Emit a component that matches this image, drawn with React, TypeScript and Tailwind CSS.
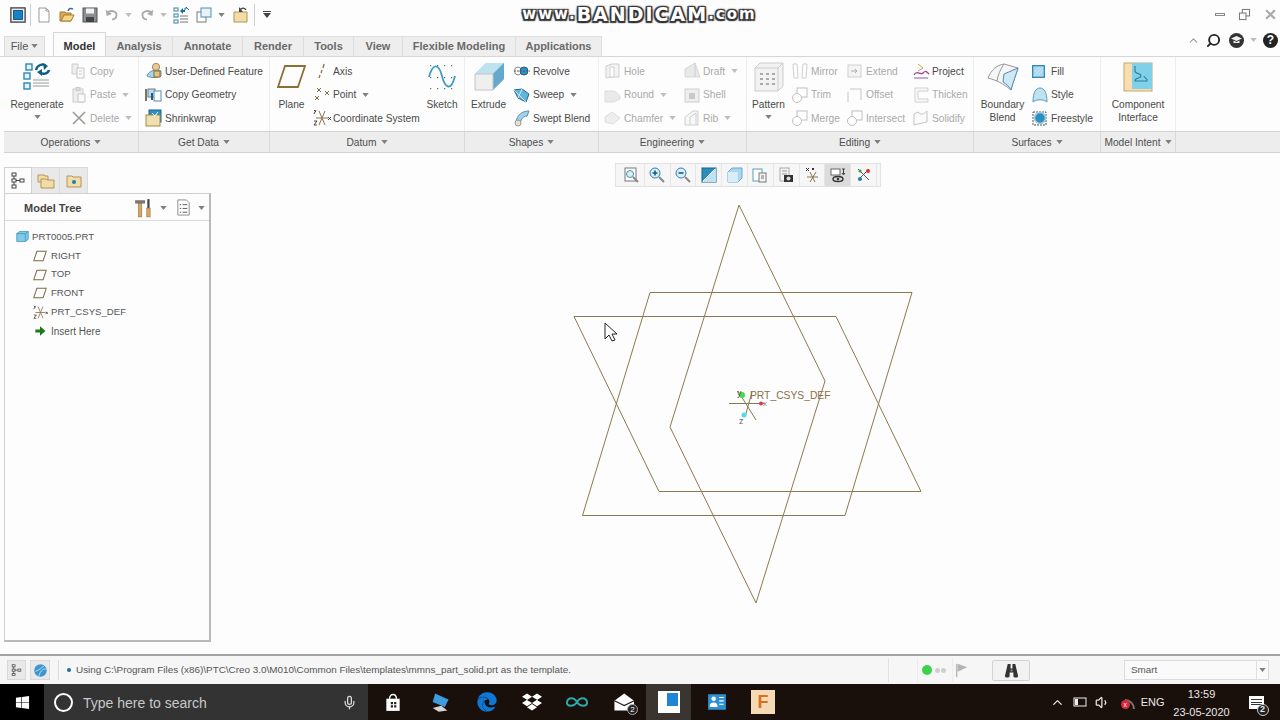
import { ReactNode } from "react"
import { FaWindows, FaDropbox, FaEdge } from "react-icons/fa"
import { ChevronUp, Volume1, Mic, Search } from "lucide-react"

// small triangle used by every dropdown
const Caret = ({ light = false }: { light?: boolean }) => (
  <svg width="7" height="4" viewBox="0 0 8 5" className="shrink-0">
    <path d="M0 0H8L4 5Z" fill={light ? "#bdbdbd" : "#808080"} />
  </svg>
)

const Ico = ({ s = 18, children }: { s?: number; children: ReactNode }) => (
  <svg width={s} height={s} viewBox="0 0 18 18" fill="none" className="shrink-0">
    {children}
  </svg>
)

// quick access toolbar
const AppIcon = () => (
  <Ico s={16}>
    <rect x="1" y="1" width="16" height="16" fill="#eee" stroke="#444" strokeWidth="1.5" />
    <rect x="4" y="4" width="10" height="10" fill="#1583c9" stroke="#0c4f7e" />
  </Ico>
)
const NewIcon = () => (
  <Ico>
    <path d="M4 2H11L14 5V16H4Z" fill="#fff" stroke="#999" />
    <path d="M11 2V5H14" stroke="#999" />
  </Ico>
)
const OpenIcon = () => (
  <Ico>
    <path d="M2 6H7L8 7H13V15H2Z" fill="#d9ad58" stroke="#a57c2e" />
    <path d="M3 15L6 9H16L13 15Z" fill="#f5d48c" stroke="#a57c2e" />
    <path d="M10 5C11 2 13 2 15 3" stroke="#4a6d8c" strokeWidth="1.5" />
  </Ico>
)
const SaveIcon = () => (
  <Ico>
    <rect x="2" y="2" width="14" height="14" fill="#8a8f96" stroke="#555" />
    <rect x="5" y="2.5" width="8" height="5" fill="#f2f2f2" />
    <rect x="5" y="11" width="8" height="5" fill="#444" />
  </Ico>
)
const UndoIcon = ({ flip = false }: { flip?: boolean }) => (
  <Ico s={16}>
    <g transform={flip ? "translate(18 0) scale(-1 1)" : undefined}>
      <path d="M4 6C8 3 15 5 14 10C13.5 13 11 14 9 14" stroke="#a9a9a9" strokeWidth="2" />
      <path d="M2 3L3 10L9 8Z" fill="#a9a9a9" />
    </g>
  </Ico>
)
const RegenSmall = () => (
  <Ico>
    <rect x="2" y="2" width="4" height="3" stroke="#3a7fa8" />
    <rect x="2" y="8" width="4" height="3" stroke="#3a7fa8" />
    <rect x="2" y="14" width="4" height="3" stroke="#3a7fa8" />
    <path d="M8 10H16M8 13H16M8 16H16" stroke="#777" />
    <path d="M8 5L11 2V4H13V6H11V8Z" fill="#1f6d9b" />
    <path d="M17 4L14 1V3H12" stroke="#1f6d9b" />
  </Ico>
)
const WindowsIcon = () => (
  <Ico>
    <rect x="2" y="6" width="9" height="10" fill="#fff" stroke="#777" />
    <rect x="6" y="2" width="10" height="9" fill="#e8f2f8" stroke="#4f8fb5" />
  </Ico>
)
const CloseFolder = () => (
  <Ico>
    <path d="M2 6H15V16H2Z" fill="#f3dca6" stroke="#b4935a" />
    <path d="M8 4C10 1 13 2 14 4" stroke="#444" strokeWidth="1.4" />
    <path d="M7 1V6H11Z" fill="#444" />
  </Ico>
)

// ribbon, small rows
const CopyIcon = () => (
  <Ico>
    <path d="M2 2H8V12H2Z" fill="#eee" stroke="#ccc" />
    <path d="M7 6H14V16H7Z" fill="#fafafa" stroke="#c4c4c4" />
    <path d="M9 9H12M9 12H12" stroke="#ccc" />
  </Ico>
)
const PasteIcon = () => (
  <Ico>
    <rect x="3" y="3" width="10" height="13" fill="#eee" stroke="#ccc" />
    <rect x="6" y="1.5" width="4" height="3" fill="#ddd" stroke="#ccc" />
    <path d="M8 8H15V16H8Z" fill="#fafafa" stroke="#c4c4c4" />
  </Ico>
)
const DeleteIcon = () => (
  <Ico>
    <path d="M3 3L15 15M15 3L3 15" stroke="#9a9a9a" strokeWidth="1.6" />
  </Ico>
)
const UdfIcon = () => (
  <Ico>
    <circle cx="11" cy="5" r="3.6" fill="#e9c99b" stroke="#a78252" />
    <path d="M2 14C4 8 12 7 16 9V14C12 16 6 16 2 14Z" fill="#a6d4ec" stroke="#5b94b6" />
    <rect x="9" y="9" width="6" height="6" fill="#e5c27f" stroke="#8c6a30" />
  </Ico>
)
const CopyGeomIcon = () => (
  <Ico>
    <path d="M1 3V15" stroke="#444" strokeWidth="1.5" />
    <rect x="3" y="3" width="7" height="8" fill="#b9dcef" stroke="#777" />
    <rect x="9" y="5" width="7" height="10" fill="#fff" stroke="#4f8fb5" />
    <path d="M7 7V14" stroke="#1d5f87" strokeWidth="2" />
  </Ico>
)
const ShrinkIcon = () => (
  <Ico>
    <rect x="4" y="1" width="12" height="12" fill="#2d93c6" stroke="#1d5f87" />
    <rect x="1" y="6" width="14" height="11" fill="#f0dfb0" stroke="#a38a4f" />
    <path d="M7 4L10 7L13 3" stroke="#fff" />
  </Ico>
)
const AxisIcon = () => (
  <Ico>
    <path d="M11 2L10 6M9 8L8 11M7 13L6 16" stroke="#8a7448" strokeWidth="1.3" />
  </Ico>
)
const PointIcon = () => (
  <Ico>
    <path d="M4 2L8 6M8 2L4 6M12 5L16 9M16 5L12 9M2 10L6 14M6 10L2 14" stroke="#7d6a42" />
  </Ico>
)
const CsysIcon = ({ s = 18 }: { s?: number }) => (
  <Ico s={s}>
    <path d="M6 2L12 16M12 2L6 16M3 9H15" stroke="#8a7448" />
    <path d="M1 1L3 3M3 1L1 5M1 12H4L1 16H4M15 8L18 11M18 8L15 11" stroke="#333" strokeWidth="0.9" />
  </Ico>
)
const RevolveIcon = () => (
  <Ico>
    <ellipse cx="5" cy="9" rx="3.5" ry="4" stroke="#888" />
    <ellipse cx="11" cy="9" rx="4" ry="4" fill="#2f8fc0" stroke="#1d5f87" />
    <path d="M1 9H17" stroke="#555" strokeDasharray="2 1" />
  </Ico>
)
const SweepIcon = () => (
  <Ico>
    <path d="M1 4L9 3L16 8L13 16L5 12Z" fill="#62b5d8" stroke="#1e6c92" />
    <path d="M1 4L13 16M9 3L5 12" stroke="#c6e6f2" />
  </Ico>
)
const SweptIcon = () => (
  <Ico>
    <path d="M3 13C4 6 9 2 16 2L14 7C10 7 8 10 7 15Z" fill="#a4d3e8" stroke="#4f8fb5" />
    <circle cx="5" cy="14" r="3" fill="#e8e2cf" stroke="#999" />
  </Ico>
)
const GhostIcon = ({ kind }: { kind: string }) => {
  const c = "#cfcfcf"
  if (kind === "hole")
    return (
      <Ico>
        <path d="M2 4L8 2H15V15H8L2 16Z" fill="#f3f3f3" stroke={c} />
        <path d="M6 5H10V15H6Z" fill="#fff" stroke={c} />
      </Ico>
    )
  if (kind === "round")
    return (
      <Ico>
        <path d="M1 5H8C12 5 16 8 16 13L10 16H1Z" fill="#eaeaea" stroke="#ddd" />
      </Ico>
    )
  if (kind === "chamfer")
    return (
      <Ico>
        <path d="M1 8L8 3L16 9L9 15L1 13Z" fill="#eee" stroke="#ddd" />
      </Ico>
    )
  if (kind === "draft")
    return (
      <Ico>
        <path d="M2 7L12 1L17 15H2Z" fill="#e9e9e9" stroke="#d6d6d6" />
        <path d="M12 1V15" stroke="#ccc" />
      </Ico>
    )
  if (kind === "shell")
    return (
      <Ico>
        <rect x="2" y="3" width="14" height="13" fill="#eee" stroke={c} />
        <rect x="6" y="7" width="6" height="6" fill="#c9c9c9" />
      </Ico>
    )
  if (kind === "rib")
    return (
      <Ico>
        <path d="M2 8L10 2H15V16H2Z" fill="#f7f7f7" stroke={c} />
        <path d="M7 16V8L13 4V16" stroke={c} />
      </Ico>
    )
  if (kind === "mirror")
    return (
      <Ico>
        <path d="M2 2H6L7 16H3Z" fill="#fff" stroke={c} />
        <path d="M16 2H12L11 16H15Z" fill="#fff" stroke={c} />
      </Ico>
    )
  if (kind === "trim" || kind === "merge" || kind === "intersect")
    return (
      <Ico>
        <rect x="6" y="2" width="10" height="9" fill="#fff" stroke="#c0c0c0" />
        <circle cx="6" cy="12" r="4.5" fill="#fff" stroke="#c0c0c0" />
      </Ico>
    )
  if (kind === "extend")
    return (
      <Ico>
        <rect x="2" y="3" width="13" height="12" fill="#f4f4f4" stroke={c} />
        <path d="M5 9H11M9 7L11 9L9 11" stroke="#aaa" />
      </Ico>
    )
  if (kind === "offset")
    return (
      <Ico>
        <path d="M4 3H15V14M2 6V16" stroke="#c4c4c4" />
      </Ico>
    )
  if (kind === "thicken")
    return (
      <Ico>
        <path d="M3 2H16V5H6V13H16V16H3Z" fill="#fafafa" stroke={c} />
      </Ico>
    )
  return (
    <Ico>
      <path d="M2 5L6 3C9 6 11 6 15 2V13L6 15L2 16Z" fill="#fafafa" stroke="#c4c4c4" />
    </Ico>
  )
}
const ProjectIcon = () => (
  <Ico>
    <path d="M6 2L11 6L6 9" stroke="#c9a24b" />
    <path d="M2 13C5 7 8 14 11 11S15 10 17 12" stroke="#a0468f" strokeWidth="1.3" />
    <path d="M2 16H16" stroke="#8d5fa8" />
  </Ico>
)
const FillIcon = () => (
  <Ico s={15}>
    <rect x="2" y="2" width="14" height="14" fill="#a9d7ee" stroke="#1f7fb0" strokeWidth="1.4" />
    <path d="M4 14L14 4M4 10L10 4M8 14L14 8" stroke="#d8eef8" />
  </Ico>
)
const StyleIcon = () => (
  <Ico>
    <path d="M2 16C2 6 5 2 9 2S16 6 16 16C12 13 6 13 2 16Z" fill="#bfe2f1" stroke="#5a9dbf" />
  </Ico>
)
const FreestyleIcon = () => (
  <Ico>
    <rect x="2" y="3" width="13" height="13" stroke="#555" strokeDasharray="2 1" />
    <circle cx="9" cy="9" r="5.5" fill="#2f8fc0" stroke="#9ed0e6" strokeWidth="1.5" />
  </Ico>
)

// ribbon, large buttons
const RegenLarge = () => (
  <svg width="32" height="30" viewBox="0 0 32 30" fill="none">
    <rect x="5" y="2" width="6" height="6" fill="#e4f2f9" stroke="#2d89b8" strokeWidth="1.4" />
    <rect x="3" y="11" width="6" height="6" fill="#e4f2f9" stroke="#2d89b8" strokeWidth="1.4" />
    <rect x="3" y="21" width="6" height="6" fill="#e4f2f9" stroke="#2d89b8" strokeWidth="1.4" />
    <path d="M12 18H28M12 21H28M12 24H28" stroke="#999" />
    <path d="M15 8C16 3 22 1 25 4" stroke="#0e5f88" strokeWidth="2.4" />
    <path d="M28 8C27 12 21 13 19 10" stroke="#0e5f88" strokeWidth="2.4" />
    <path d="M22 1L27 4L23 8Z M21 14L16 10L21 7Z" fill="#0e5f88" />
  </svg>
)
const PlaneIcon = () => (
  <svg width="30" height="26" viewBox="0 0 30 26" fill="none">
    <path d="M8 2H28L21 23H1Z" fill="#fdfdfd" stroke="#8a7035" strokeWidth="1.8" />
  </svg>
)
const SketchIcon = () => (
  <svg width="30" height="30" viewBox="0 0 30 30" fill="none">
    {[3, 10, 17, 24].map((x) =>
      [3, 15, 26].map((y) => <rect key={`${x}-${y}`} x={x} y={y} width="1.2" height="1.2" fill="#666" />),
    )}
    <path d="M2 15C6 0 12 2 15 14S24 30 28 14" stroke="#3d9cc8" strokeWidth="1.8" />
  </svg>
)
const ExtrudeIcon = () => (
  <svg width="32" height="32" viewBox="0 0 32 32" fill="none">
    <path d="M2 13L13 2H31V18L20 29H2Z" fill="#8cc7e0" />
    <path d="M13 2H31L20 13H2Z" fill="#bfe2f1" />
    <path d="M20 13L31 2V18L20 29Z" fill="#62a9cc" />
    <path d="M2 13H20V29H2Z" fill="#efefef" stroke="#c4c4c4" />
  </svg>
)
const PatternIcon = () => (
  <svg width="30" height="30" viewBox="0 0 30 30" fill="none">
    <path d="M1 6L6 1H29V24L24 29H1Z" fill="#f2f2f2" stroke="#ccc" />
    <path d="M1 6H24V29M24 6L29 1" stroke="#ccc" />
    {[6, 12, 18].map((x) =>
      [11, 16, 21].map((y) => <rect key={`${x}-${y}`} x={x} y={y} width="3" height="2" fill="#aaa" />),
    )}
  </svg>
)
const BoundaryIcon = () => (
  <svg width="34" height="30" viewBox="0 0 34 30" fill="none">
    <path d="M2 16C5 8 11 3 18 2L32 6C30 13 27 20 25 28C18 22 10 18 2 16Z" fill="#f6f6f6" stroke="#999" />
    <path d="M18 2C14 8 12 13 11 19" stroke="#999" />
    <path d="M18 12L32 6C30 13 27 20 25 28C23 24 20 22 17 20Z" fill="#cfe8f4" stroke="#4f8fb5" />
  </svg>
)
const ComponentIcon = () => (
  <svg width="30" height="30" viewBox="0 0 30 30" fill="none">
    <rect x="1" y="1" width="28" height="28" fill="#f7deb0" stroke="#c9a769" />
    <path d="M9 1H29V27H9Z" fill="#7fd0e8" />
    <path d="M12 4V9C12 12 18 11 18 14C18 17 12 15 12 19H24C25 16 21 16 21 14" stroke="#2d7c9c" strokeWidth="1.1" />
  </svg>
)

const Row = ({
  icon,
  label,
  off = false,
  caret = false,
}: {
  icon: ReactNode
  label: string
  off?: boolean
  caret?: boolean
}) => (
  <div className="flex h-[23.5px] items-center">
    <span className="flex w-[20px] shrink-0 items-center pr-[2px]">{icon}</span>
    <span className={`whitespace-nowrap ${off ? "text-[#a9a9a9]" : "text-[#4a4a4a]"}`}>{label}</span>
    {caret && (
      <span className="ml-[6px]">
        <Caret light={off} />
      </span>
    )}
  </div>
)

const Large = ({
  icon,
  lines,
  caret = false,
  className = "",
}: {
  icon: ReactNode
  lines: string[]
  caret?: boolean
  className?: string
}) => (
  <div className={`flex shrink-0 flex-col items-center ${className}`}>
    <div className="flex h-[35px] items-center justify-center">{icon}</div>
    <div className="mt-[4px] text-center leading-[13px] text-[#4a4a4a]">
      {lines.map((l) => (
        <div key={l} className="whitespace-nowrap">
          {l}
        </div>
      ))}
    </div>
    {caret && (
      <div className="mt-[4px]">
        <Caret />
      </div>
    )}
  </div>
)

const Group = ({ label, className, children }: { label: string; className: string; children: ReactNode }) => (
  <div className={`shrink-0 ${className}`}>
    <div className="flex h-[74px] border-r border-[#eeeeee] pt-[2px]">{children}</div>
    <div className="flex h-[22px] items-center justify-center gap-[4px] border-t border-r border-b border-t-[#d2d2d2] border-r-[#d9d9d9] border-b-[#d2d2d2] bg-[#ededed] text-[#4d4d4d]">
      {label}
      <Caret />
    </div>
  </div>
)

const Ribbon = () => (
  <div className="flex border-t border-[#d6d6d6] pl-[4px] text-[10.2px]">
    <Group label="Operations" className="w-[135px]">
      <Large icon={<RegenLarge />} lines={["Regenerate"]} caret className="w-[66px]" />
      <div>
        <Row icon={<CopyIcon />} label="Copy" off />
        <Row icon={<PasteIcon />} label="Paste" off caret />
        <Row icon={<DeleteIcon />} label="Delete" off caret />
      </div>
    </Group>
    <Group label="Get Data" className="w-[131px]">
      <div className="ml-[6px]">
        <Row icon={<UdfIcon />} label="User-Defined Feature" />
        <Row icon={<CopyGeomIcon />} label="Copy Geometry" />
        <Row icon={<ShrinkIcon />} label="Shrinkwrap" />
      </div>
    </Group>
    <Group label="Datum" className="w-[195px]">
      <Large icon={<PlaneIcon />} lines={["Plane"]} className="w-[43px]" />
      <div className="w-[107px]">
        <Row icon={<AxisIcon />} label="Axis" />
        <Row icon={<PointIcon />} label="Point" caret />
        <Row icon={<CsysIcon />} label="Coordinate System" />
      </div>
      <Large icon={<SketchIcon />} lines={["Sketch"]} className="w-[44px]" />
    </Group>
    <Group label="Shapes" className="w-[134px]">
      <Large icon={<ExtrudeIcon />} lines={["Extrude"]} className="w-[47px]" />
      <div className="ml-[1px]">
        <Row icon={<RevolveIcon />} label="Revolve" />
        <Row icon={<SweepIcon />} label="Sweep" caret />
        <Row icon={<SweptIcon />} label="Swept Blend" />
      </div>
    </Group>
    <Group label="Engineering" className="w-[148px]">
      <div className="ml-[5px] w-[79px]">
        <Row icon={<GhostIcon kind="hole" />} label="Hole" off />
        <Row icon={<GhostIcon kind="round" />} label="Round" off caret />
        <Row icon={<GhostIcon kind="chamfer" />} label="Chamfer" off caret />
      </div>
      <div>
        <Row icon={<GhostIcon kind="draft" />} label="Draft" off caret />
        <Row icon={<GhostIcon kind="shell" />} label="Shell" off />
        <Row icon={<GhostIcon kind="rib" />} label="Rib" off caret />
      </div>
    </Group>
    <Group label="Editing" className="w-[227px]">
      <Large icon={<PatternIcon />} lines={["Pattern"]} caret className="w-[43px]" />
      <div className="ml-[1px] w-[55px]">
        <Row icon={<GhostIcon kind="mirror" />} label="Mirror" off />
        <Row icon={<GhostIcon kind="trim" />} label="Trim" off />
        <Row icon={<GhostIcon kind="merge" />} label="Merge" off />
      </div>
      <div className="w-[66px]">
        <Row icon={<GhostIcon kind="extend" />} label="Extend" off />
        <Row icon={<GhostIcon kind="offset" />} label="Offset" off />
        <Row icon={<GhostIcon kind="intersect" />} label="Intersect" off />
      </div>
      <div>
        <Row icon={<ProjectIcon />} label="Project" />
        <Row icon={<GhostIcon kind="thicken" />} label="Thicken" off />
        <Row icon={<GhostIcon kind="solidify" />} label="Solidify" off />
      </div>
    </Group>
    <Group label="Surfaces" className="w-[127px]">
      <Large icon={<BoundaryIcon />} lines={["Boundary", "Blend"]} className="w-[57px]" />
      <div>
        <Row icon={<FillIcon />} label="Fill" />
        <Row icon={<StyleIcon />} label="Style" />
        <Row icon={<FreestyleIcon />} label="Freestyle" />
      </div>
    </Group>
    <Group label="Model Intent" className="w-[75px]">
      <Large icon={<ComponentIcon />} lines={["Component", "Interface"]} className="w-full" />
    </Group>
    <div className="flex-1">
      <div className="h-[74px]" />
      <div className="h-[22px] border-y border-[#d2d2d2] bg-[#ededed]" />
    </div>
  </div>
)

const QuickBar = () => (
  <div className="flex h-[29px] items-center pl-[10px]">
    <AppIcon />
    <div className="mr-[4px] ml-[4px] h-[22px] w-px bg-[#cfcfcf]" />
    <div className="flex items-center gap-[5px]">
      <NewIcon />
      <OpenIcon />
      <SaveIcon />
    </div>
    <div className="ml-[5px] flex items-center gap-[5px]">
      <UndoIcon />
      <Caret light />
    </div>
    <div className="ml-[7px] flex items-center gap-[5px]">
      <UndoIcon flip />
      <Caret light />
    </div>
    <div className="ml-[5px]">
      <RegenSmall />
    </div>
    <div className="ml-[5px] flex items-center gap-[5px]">
      <WindowsIcon />
      <Caret />
    </div>
    <div className="ml-[7px]">
      <CloseFolder />
    </div>
    <div className="ml-[4px] h-[22px] w-px bg-[#cfcfcf]" />
    <div className="ml-[8px] flex flex-col items-center gap-[1px]">
      <div className="h-px w-[8px] bg-[#444]" />
      <svg width="8" height="5" viewBox="0 0 8 5">
        <path d="M0 0H8L4 5Z" fill="#444" />
      </svg>
    </div>
  </div>
)

const tabs = [
  { label: "Analysis", w: "w-[67px]" },
  { label: "Annotate", w: "w-[70px]" },
  { label: "Render", w: "w-[61px]" },
  { label: "Tools", w: "w-[50px]" },
  { label: "View", w: "w-[49px]" },
  { label: "Flexible Modeling", w: "w-[113px]" },
  { label: "Applications", w: "w-[86px]" },
]

const TabBar = () => (
  <div className="flex h-[24px] items-end pl-[4px] text-[11px] font-bold text-[#6a6a6a]">
    <div className="flex h-[20px] w-[41px] items-center justify-center gap-[3px] border border-b-0 border-[#dcdcdc] bg-[#eeeeee] pb-[1px] font-normal text-[#555]">
      File
      <Caret />
    </div>
    <div className="ml-[8px] flex h-[24px] w-[53px] items-center justify-center border border-b-0 border-[#d6d6d6] bg-[#fcfcfc] pt-[3px] text-[#333]">
      Model
    </div>
    {tabs.map((t) => (
      <div
        key={t.label}
        className={`flex h-[20px] items-center justify-center border-t border-r border-[#dedede] bg-[#eeeeee] pb-[1px] ${t.w}`}
      >
        {t.label}
      </div>
    ))}
    <div className="flex h-[24px] flex-1 items-center justify-end gap-[6px] pr-[2px] pb-[8px]">
      <ChevronUp size={13} strokeWidth={2} className="text-[#999]" />
      <Search size={15} strokeWidth={3} className="-scale-x-100 text-[#222]" />
      <div className="ml-[2px] flex h-[15px] w-[15px] items-center justify-center rounded-full bg-[#333]">
        <svg width="11" height="8" viewBox="0 0 11 8">
          <path d="M0 2.5L5.5 0L11 2.5L5.5 5Z M2.5 4.5L5.5 6L8.5 4.5V7H2.5Z" fill="#eee" />
        </svg>
      </div>
      <Caret light />
      <div className="flex h-[15px] w-[15px] items-center justify-center rounded-full bg-[#222] text-[12px] leading-none text-white">
        ?
      </div>
    </div>
  </div>
)

const WindowControls = () => (
  <div className="ml-auto flex h-[29px] items-center gap-[13px] pr-[3.5px]">
    <div className="h-[3px] w-[10px] border border-[#888]" />
    <Ico s={13}>
      <rect x="6" y="2" width="10" height="9" stroke="#777" strokeWidth="1.4" />
      <rect x="2" y="7" width="9" height="9" fill="#fdfdfd" stroke="#777" strokeWidth="1.4" />
    </Ico>
    <Ico s={13}>
      <path d="M3 3L15 15M15 3L3 15" stroke="#aaa" strokeWidth="3" />
    </Ico>
  </div>
)

const GraphicsIcons = [
  <Ico key="refit">
    <rect x="3" y="2" width="11" height="13" fill="#fff" stroke="#777" />
    <circle cx="8" cy="8" r="3.5" fill="#d8edf7" stroke="#4f8fb5" />
    <path d="M11 11L16 16" stroke="#888" strokeWidth="2" />
  </Ico>,
  <Ico key="in">
    <circle cx="7" cy="7" r="5" fill="#d8edf7" stroke="#3a7fa8" />
    <path d="M4.5 7H9.5M7 4.5V9.5" stroke="#0e5f88" strokeWidth="1.6" />
    <path d="M11 11L16 16" stroke="#888" strokeWidth="2" />
  </Ico>,
  <Ico key="out">
    <circle cx="7" cy="7" r="5" fill="#d8edf7" stroke="#3a7fa8" />
    <path d="M4.5 7H9.5" stroke="#0e5f88" strokeWidth="1.6" />
    <path d="M11 11L16 16" stroke="#888" strokeWidth="2" />
  </Ico>,
  <Ico key="repaint">
    <rect x="2" y="2" width="14" height="14" fill="#2d8dbb" stroke="#1d5f87" />
    <path d="M2 16L16 2V16Z" fill="#bfe2f1" />
    <path d="M3 15L15 3" stroke="#fff" />
  </Ico>,
  <Ico key="display">
    <path d="M2 6L6 2H16V12L12 16H2Z" fill="#a9d7ee" stroke="#6aa9c9" />
    <path d="M2 6H12V16H2Z" fill="#d7edf7" />
  </Ico>,
  <Ico key="views">
    <rect x="2" y="3" width="9" height="12" fill="#fff" stroke="#5a9dbf" />
    <rect x="8" y="7" width="7" height="9" fill="#f4f4f4" stroke="#777" />
    <path d="M10 10H13M10 12H13" stroke="#777" />
  </Ico>,
  <Ico key="section">
    <rect x="3" y="2" width="9" height="13" fill="#f4f4f4" stroke="#aaa" />
    <path d="M5 5H10M5 8H10" stroke="#999" />
    <rect x="7" y="9" width="9" height="7" fill="#333" />
    <circle cx="11.5" cy="12.5" r="2" fill="#ddd" />
  </Ico>,
  <Ico key="csys">
    <path d="M7 6L12 16M13 6L7 16M4 11H15" stroke="#8a7448" />
    <path d="M3 2L6 5M6 2L3 5M9 2L11 4M11 2L9 4" stroke="#333" />
  </Ico>,
  <Ico key="annot">
    <rect x="2" y="3" width="9" height="6" fill="#fff" stroke="#666" />
    <path d="M13 3H16M14.5 3V8M13 7L14.5 9L16 7" stroke="#444" />
    <ellipse cx="9" cy="13" rx="5" ry="2.5" stroke="#333" strokeWidth="1.4" />
    <circle cx="9" cy="13" r="1.3" fill="#333" />
  </Ico>,
  <Ico key="spin">
    <path d="M3 3L14 14M14 3L3 14" stroke="#555" />
    <circle cx="13" cy="5" r="2" fill="#d33" />
    <circle cx="5" cy="13" r="2" fill="#1f7fb0" />
    <circle cx="5" cy="5" r="1.5" fill="#2a2" />
  </Ico>,
]

const GraphicsToolbar = () => (
  <div className="absolute top-[10px] left-[404px] flex h-[24px] w-[266px] border border-[#e2e2e2] bg-[#f6f6f6] pl-[3px]">
    {GraphicsIcons.map((icon, i) => (
      <div
        key={i}
        className={`flex h-full w-[25.8px] items-center justify-center border-r border-[#e6e6e6] ${
          i === 8 ? "bg-[#dcdcdc]" : ""
        }`}
      >
        {icon}
      </div>
    ))}
  </div>
)

const Model = () => (
  <svg viewBox="211 153 1069 501" className="h-full w-full" fill="none">
    <g stroke="#8c7a4e" strokeWidth="1">
      <path d="M650 292.5H912L845 515.5H582.5Z" />
      <path d="M574 316.5H836L921 491.5H659Z" />
      <path d="M739 205L825 381L756 603L670 427Z" />
      <path d="M729 403.5H765M738 391L756 420M752 392L745 417" />
    </g>
    <circle cx="742" cy="395" r="3" fill="#38e04a" />
    <circle cx="761" cy="403.5" r="2" fill="#e8344a" />
    <circle cx="744" cy="415" r="2.5" fill="#4fdcea" />
    <text x="737" y="396" fontSize="9" fill="#555">
      y
    </text>
    <text x="763" y="406" fontSize="8" fill="#888">
      x
    </text>
    <text x="739" y="424" fontSize="9" fill="#666">
      z
    </text>
    <text x="750" y="399" fontSize="10.3" fill="#8a6f4a" fontFamily="Liberation Sans, Arial, sans-serif">
      PRT_CSYS_DEF
    </text>
    <path d="M605 323V339L609 335L612 341L615 340L612 334H617Z" fill="#fff" stroke="#222" />
  </svg>
)

const treeRows = [
  { label: "RIGHT", icon: "plane", size: "text-[9.6px]" },
  { label: "TOP", icon: "plane", size: "text-[9.6px]" },
  { label: "FRONT", icon: "plane", size: "text-[9.6px]" },
  { label: "PRT_CSYS_DEF", icon: "csys", size: "text-[9.6px]" },
  { label: "Insert Here", icon: "insert", size: "text-[10px]" },
]

const TreeIcon = ({ kind }: { kind: string }) => {
  if (kind === "csys") return <CsysIcon s={15} />
  if (kind === "insert")
    return (
      <Ico s={14}>
        <path d="M3 7H9V3L16 9L9 15V11H3Z" fill="#1a7a1a" />
      </Ico>
    )
  return (
    <Ico s={14}>
      <path d="M5 3H17L13 15H1Z" stroke="#7d6a42" strokeWidth="1.3" />
    </Ico>
  )
}

const LeftPanel = () => (
  <div className="flex h-[489px] w-[211px] shrink-0 flex-col pt-[14px] pl-[4px] text-[#555]">
    <div className="flex h-[27px]">
      <div className="flex w-[28px] items-center justify-center border border-b-0 border-[#d0d0d0] bg-[#fcfcfc]">
        <Ico>
          <rect x="3" y="1" width="4" height="3" stroke="#444" />
          <rect x="3" y="7" width="4" height="3" stroke="#444" />
          <rect x="3" y="13" width="4" height="3" stroke="#444" />
          <rect x="11" y="7" width="4" height="3" stroke="#444" />
          <path d="M5 4V7M5 10V13M7 8.5H11" stroke="#444" />
        </Ico>
      </div>
      <div className="flex w-[28px] items-center justify-center border-t border-r border-[#dcdcdc] bg-[#e9e9e9]">
        <Ico>
          <path d="M1 3H7L8 4H11V10H1Z" fill="#f3dca6" stroke="#b4935a" />
          <path d="M4 7H9L10 8H17V16H4Z" fill="#f3dca6" stroke="#b4935a" />
        </Ico>
      </div>
      <div className="flex w-[28px] items-center justify-center border-t border-r border-[#dcdcdc] bg-[#e9e9e9]">
        <Ico>
          <path d="M2 4H7L8 5H16V15H2Z" fill="#f3dca6" stroke="#b4935a" />
          <circle cx="9" cy="10" r="2" fill="#1f7fb0" />
        </Ico>
      </div>
    </div>
    <div className="-mt-px flex flex-1 flex-col border-t border-r-2 border-b-2 border-l border-t-[#d0d0d0] border-r-[#b9b9b9] border-b-[#b9b9b9] border-l-[#d0d0d0]">
      <div className="flex h-[27px] items-center border-b border-[#dcdcdc] pt-[1px] pl-[19px]">
        <span className="text-[11px] font-bold text-[#444]">Model Tree</span>
        <div className="ml-auto flex items-center pr-[4px]">
          <Ico s={20}>
            <path d="M1 2H10V5H1Z" fill="#777" />
            <rect x="4" y="5" width="3" height="12" fill="#d9a760" stroke="#8c6a30" strokeWidth="0.5" />
            <rect x="12" y="1" width="2" height="8" fill="#444" />
            <rect x="11.5" y="9" width="3" height="8" fill="#d9a760" stroke="#8c6a30" strokeWidth="0.5" />
          </Ico>
          <span className="mr-[8px] ml-[6px]">
            <Caret />
          </span>
          <Ico s={17}>
            <path d="M3 1H12L15 4V17H3Z" fill="#fff" stroke="#888" />
            <path d="M5 6H6.5M8 6H13M5 10H6.5M8 10H13M5 14H6.5M8 14H13" stroke="#555" />
          </Ico>
          <span className="ml-[6px]">
            <Caret />
          </span>
        </div>
      </div>
      <div className="pt-[6px] pl-[11px]">
        <div className="flex h-[19px] items-center gap-[3px] text-[9.6px]">
          <Ico s={13}>
            <path d="M1 5L5 2H17V13L13 16H1Z" fill="#7fcbe8" stroke="#3a8fb8" />
            <path d="M1 5H13V16M13 5L17 2" stroke="#3a8fb8" />
          </Ico>
          <span>PRT0005.PRT</span>
        </div>
        {treeRows.map((r) => (
          <div key={r.label} className={`flex h-[18.8px] items-center pl-[17px] ${r.size}`}>
            <span className="flex w-[18px] items-center">
              <TreeIcon kind={r.icon} />
            </span>
            <span>{r.label}</span>
          </div>
        ))}
      </div>
    </div>
  </div>
)

const StatusBar = () => (
  <div className="flex h-[30px] items-center border-t-2 border-[#a3a3a3] bg-[#f6f6f6] text-[9.9px] text-[#555]">
    <div className="ml-[7px] flex h-[20px] w-[19px] items-center justify-center border border-[#d8d8d8] bg-[#e9e9e9]">
      <Ico s={13}>
        <rect x="3" y="1" width="4" height="3" stroke="#444" />
        <rect x="3" y="7" width="4" height="3" stroke="#444" />
        <rect x="3" y="13" width="4" height="3" stroke="#444" />
        <rect x="11" y="7" width="4" height="3" stroke="#444" />
        <path d="M5 4V7M5 10V13M7 8.5H11" stroke="#444" />
      </Ico>
    </div>
    <div className="ml-[4px] flex h-[20px] w-[20px] items-center justify-center border border-[#d8d8d8] bg-[#e9e9e9]">
      <Ico s={15}>
        <circle cx="9" cy="9" r="7.5" fill="#3d96d0" />
        <path d="M3 10C7 9 11 5 14 3M7 16C8 11 11 7 16 7" stroke="#cfe8f4" />
      </Ico>
    </div>
    <div className="ml-[8px] h-[20px] w-px bg-[#dddddd]" />
    <div className="ml-[8px] h-[4px] w-[4px] rounded-full bg-[#1f6d9b]" />
    <span className="ml-[5px] whitespace-nowrap">
      Using C:\Program Files (x86)\PTC\Creo 3.0\M010\Common Files\templates\mmns_part_solid.prt as the template.
    </span>
    <div className="ml-auto flex h-full items-center">
      <div className="h-[24px] w-px bg-[#e4e4e4]" />
      <div className="ml-[28px] h-[24px] w-px bg-[#ececec]" />
      <div className="ml-[4px] h-[10px] w-[10px] rounded-full bg-[#3bd24b]" />
      <div className="ml-[3px] h-[5px] w-[5px] rounded-full bg-[#cfcfcf]" />
      <div className="ml-[1px] h-[5px] w-[5px] rounded-full bg-[#cfcfcf]" />
      <div className="ml-[6px] h-[24px] w-px bg-[#ececec]" />
      <div className="ml-[1px]">
        <Ico s={16}>
          <path d="M3 2V17" stroke="#bbb" strokeWidth="1.6" />
          <path d="M4 2L15 6L4 11Z" fill="#b3b3b3" />
        </Ico>
      </div>
      <div className="ml-[22px] flex h-[21px] w-[38px] items-center justify-center rounded-[2px] border border-[#d2d2d2] bg-[#f2f2f2]">
        <Ico s={17}>
          <path d="M5 2H8V7H10V2H13L16 15C16 17 11 17 11 15V11H7V15C7 17 2 17 2 15Z" fill="#333" />
          <rect x="8" y="8" width="2" height="2" fill="#999" />
        </Ico>
      </div>
      <div className="mr-[11px] ml-[94px] flex h-[20px] w-[145px] items-center border border-[#dcdcdc] bg-[#fafafa] pl-[6px]">
        Smart
        <div className="ml-auto flex h-full w-[12px] items-center justify-center border-l border-[#e0e0e0]">
          <Caret />
        </div>
      </div>
    </div>
  </div>
)

const Taskbar = () => (
  <div className="flex h-[36px] items-center bg-[#1a100b] text-white">
    <div className="flex h-full w-[44px] items-center justify-center bg-black">
      <FaWindows size={15} />
    </div>
    <div className="flex h-full w-[324px] items-center bg-[#333333]">
      <div className="ml-[10px] h-[19px] w-[19px] rounded-full border-[2.5px] border-white" />
      <span className="ml-[10px] pt-[2px] text-[14px] text-[#c8c8c8]">Type here to search</span>
      <Mic size={15} className="mr-[11.5px] ml-auto text-[#ddd]" />
    </div>
    <div className="ml-[15px] flex items-center">
      <Ico s={20}>
        <path d="M3 6H15V17H3Z" fill="#fff" />
        <path d="M6 6C6 1 12 1 12 6" stroke="#fff" strokeWidth="1.3" />
        <path d="M7 9H9V11H7ZM10 9H12V11H10ZM7 12H9V14H7ZM10 12H12V14H10Z" fill="#222" />
      </Ico>
      <div className="ml-[26px]">
        <Ico s={22}>
          <path d="M5 2L16 7L13 13L3 9Z" fill="#3d9be0" />
          <path d="M3 14L10 12L15 16L8 17Z" fill="#d5d5d5" />
        </Ico>
      </div>
      <FaEdge size={20} className="ml-[26px] text-[#0f78d4]" />
      <FaDropbox size={20} className="ml-[25px] text-white" />
      <div className="ml-[23px]">
        <svg width="24" height="14" viewBox="0 0 24 14" fill="none">
          <path
            d="M12 7C9 2 3 2 2 7S9 12 12 7S21 2 22 7S15 12 12 7Z"
            stroke="#2fa8a8"
            strokeWidth="2"
          />
        </svg>
      </div>
      <div className="relative ml-[23px]">
        <Ico s={22}>
          <path d="M2 8L10 2L18 8V16H2Z" fill="#fff" />
          <path d="M2 8L10 12L18 8" stroke="#222" />
        </Ico>
        <span className="absolute -right-[4px] -bottom-[2px] flex h-[11px] w-[11px] items-center justify-center rounded-full border border-[#aaa] bg-[#222] text-[8px] leading-none">
          2
        </span>
      </div>
      <div className="ml-[12px] flex h-[36px] w-[45px] items-center justify-center bg-[#3b3532]">
        <div className="flex h-[22px] w-[22px] justify-end bg-white p-[2px]">
          <div className="h-[13px] w-[11px] bg-[#1f86d6]" />
        </div>
      </div>
      <div className="ml-[16px]">
        <Ico s={20}>
          <rect x="1" y="2" width="16" height="14" fill="#2f8fd0" />
          <circle cx="6" cy="6" r="2" fill="#fff" />
          <path d="M3 13C3 9 9 9 9 13ZM11 5H15M11 8H15M11 11H15" fill="#fff" stroke="#fff" />
        </Ico>
      </div>
      <div className="ml-[24px] flex h-[24px] w-[24px] items-center justify-center bg-[#f4d9b5]">
        <span className="text-[18px] font-bold text-[#d9701e]">F</span>
      </div>
    </div>
    <div className="ml-auto flex h-full items-center text-[#e8e8e8]">
      <ChevronUp size={15} />
      <svg width="14" height="10" viewBox="0 0 14 10" fill="none" className="ml-[8px]">
        <rect x="1" y="1" width="12" height="8" stroke="#eee" />
        <rect x="2" y="2" width="3" height="6" fill="#eee" />
      </svg>
      <Volume1 size={15} className="ml-[8px]" />
      <div className="relative ml-[11px] h-[14px] w-[14px]">
        <div className="absolute right-0 bottom-0 h-[10px] w-[10px] rounded-tr-full border-t-2 border-r-2 border-[#777]" />
        <div className="absolute bottom-0 left-0 flex h-[9px] w-[9px] items-center justify-center rounded-full bg-[#d8283c] text-[7px] leading-none">
          x
        </div>
      </div>
      <span className="ml-[6px] text-[11px]">ENG</span>
      <div className="ml-[6px] flex w-[62px] flex-col items-center pt-[2px] text-[11px] leading-[18px] whitespace-nowrap">
        <span>13:59</span>
        <span>23-05-2020</span>
      </div>
      <div className="relative mr-[16.5px] ml-[16px]">
        <div className="flex h-[13px] w-[15px] flex-col justify-center gap-[1.5px] bg-white px-[2px]">
          <div className="h-px bg-[#333]" />
          <div className="h-px bg-[#333]" />
          <div className="h-px bg-[#333]" />
        </div>
        <span className="absolute -right-[5px] -bottom-[7px] flex h-[12px] w-[12px] items-center justify-center rounded-full border border-[#ccc] bg-[#222] text-[9px] leading-none font-bold">
          2
        </span>
      </div>
    </div>
  </div>
)

export default function App() {
  return (
    <div className="relative flex h-[720px] w-[1280px] flex-col overflow-hidden bg-[#fdfdfd] font-['Liberation_Sans',Arial,sans-serif]">
      <div className="flex h-[33px] items-start">
        <QuickBar />
        <WindowControls />
      </div>
      <TabBar />
      <Ribbon />
      <div className="flex flex-1">
        <LeftPanel />
        <div className="relative flex-1">
          <Model />
          <GraphicsToolbar />
        </div>
      </div>
      <StatusBar />
      <Taskbar />
      {/* recorder watermark over the title bar */}
      <div className="absolute top-[3px] left-[522px] flex h-[22px] w-[235px] items-center justify-center font-['DejaVu_Sans',sans-serif] font-bold tracking-[2px] whitespace-nowrap text-white [text-shadow:-1.5px_-1.5px_1px_#333,1.5px_-1.5px_1px_#333,-1.5px_1.5px_1px_#333,1.5px_1.5px_1px_#333,0_0_3px_#222]">
        <span className="text-[15px]">www.</span>
        <span className="text-[19px]">BANDICAM</span>
        <span className="text-[15px]">.com</span>
      </div>
    </div>
  )
}
